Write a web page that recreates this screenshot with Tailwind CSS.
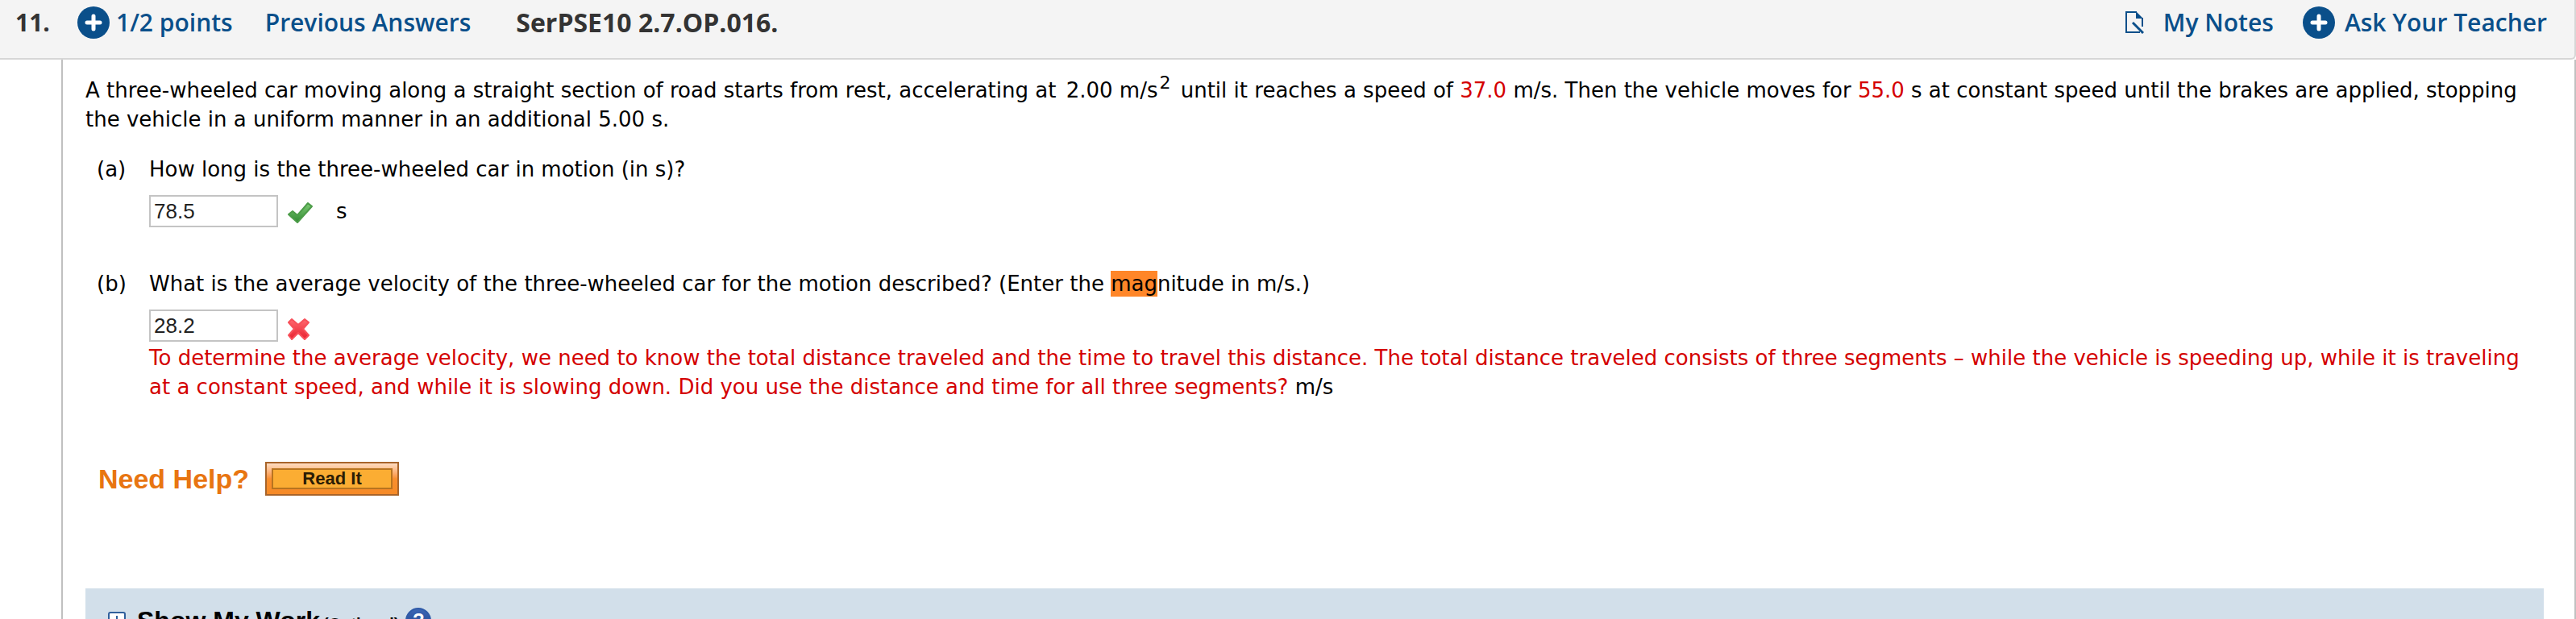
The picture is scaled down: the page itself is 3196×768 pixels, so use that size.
<!DOCTYPE html>
<html lang="en">
<head>
    <meta charset="UTF-8">
    <meta name="viewport" content="width=device-width, initial-scale=1.0">
    <title>SerPSE10 2.7.OP.016.</title>
    <script src="https://cdn.jsdelivr.net/npm/@tailwindcss/browser@4"></script>
</head>
<body class="h-screen flex flex-col overflow-hidden bg-white text-black text-[26px] leading-9 font-['Verdana','DejaVu_Sans',sans-serif]">

    <!-- Question header -->
    <header class="flex shrink-0 items-start justify-between h-[74px] pl-[19px] pr-[34px] pt-2 bg-[#f4f4f4] border-b-2 border-r-2 border-[#d6d6d6] rounded-br-md font-['Open_Sans',sans-serif] text-[30px] leading-10 font-semibold text-[#0a4f8a] whitespace-nowrap">
        <div class="flex items-center">
            <span class="w-[77px] text-[#333333] font-bold">11.</span>
            <a href="#" class="flex items-center gap-2">
                <svg class="size-10" viewBox="0 0 40 40"><circle cx="20" cy="20" r="20" fill="#0a4f8a"/><path d="M20 12v16M12 20h16" stroke="#fff" stroke-width="5" stroke-linecap="round"/></svg>
                1/2 points
            </a>
            <a href="#" class="ml-10">Previous Answers</a>
            <h1 class="ml-14 text-[#333333] text-[32px] font-bold">SerPSE10 2.7.OP.016.</h1>
        </div>
        <div class="flex items-center gap-9">
            <a href="#" class="flex items-center gap-6">
                <svg class="w-6 h-7" viewBox="0 0 24 28"><path d="M22 8v11M15 1H2v25h17" fill="none" stroke="#0a4f8a" stroke-width="2"/><path d="M14 0l9 9h-9z" fill="#0a4f8a"/><path d="M10 14l13 13" stroke="#0a4f8a" stroke-width="3"/></svg>
                My Notes
            </a>
            <a href="#" class="flex items-center gap-3">
                <svg class="size-10" viewBox="0 0 40 40"><circle cx="20" cy="20" r="20" fill="#0a4f8a"/><path d="M20 12v16M12 20h16" stroke="#fff" stroke-width="5" stroke-linecap="round"/></svg>
                Ask Your Teacher
            </a>
        </div>
    </header>

    <main class="grow ml-[76px] pl-7 pr-[38px] pt-5 border-l-2 border-r-2 border-[#c0c0c0]">
        <p>A three-wheeled car moving along a straight section of road starts from rest, accelerating at <span class="mx-1">2.00 m/s<sup class="ml-0.5 text-[22px]">2</sup></span> until it reaches a speed of <span class="text-[#d40000]">37.0</span> m/s. Then the vehicle moves for <span class="text-[#d40000]">55.0</span> s at constant speed until the brakes are applied, stopping the vehicle in a uniform manner in an additional 5.00 s.</p>

        <!-- Part (a) -->
        <section class="flex mt-[26px] pl-3.5">
            <span class="w-[65px] shrink-0">(a)</span>
            <div>
                <label for="part-a">How long is the three-wheeled car in motion (in s)?</label>
                <div class="flex items-center mt-3.5">
                    <input id="part-a" type="text" value="78.5" class="w-40 h-10 px-1 border-2 border-[#c4c4c4] text-[#222222] font-['Liberation_Sans',sans-serif]">
                    <svg class="w-8 h-7 ml-3 mt-1" viewBox="0 0 32 28">
                        <defs><linearGradient id="green" x2="0" y2="1"><stop stop-color="#7fcb74"/><stop offset="1" stop-color="#2f8a32"/></linearGradient></defs>
                        <path d="M1 16l5-4 6 5L25 2l5 4-18 20z" fill="url(#green)" stroke="#4c9c48" stroke-width="2" stroke-linejoin="round"/>
                    </svg>
                    <span class="ml-7">s</span>
                </div>
            </div>
        </section>

        <!-- Part (b) -->
        <section class="flex mt-13 pl-3.5">
            <span class="w-[65px] shrink-0">(b)</span>
            <div>
                <label for="part-b">What is the average velocity of the three-wheeled car for the motion described? (Enter the <mark class="py-px bg-[#ff8628] text-black">mag</mark>nitude in m/s.)</label>
                <div class="flex items-center mt-3.5">
                    <input id="part-b" type="text" value="28.2" class="w-40 h-10 px-1 border-2 border-[#c4c4c4] text-[#222222] font-['Liberation_Sans',sans-serif]">
                    <svg class="size-7 ml-3 mt-2" viewBox="0 0 28 28">
                        <defs><linearGradient id="red" x2="0" y2="1"><stop stop-color="#ff6a70"/><stop offset="1" stop-color="#e8202e"/></linearGradient></defs>
                        <path d="M5 2l8 7 8-7 5 4-7 8 7 8-5 5-8-8-8 8-4-5 7-8-7-8z" fill="url(#red)" stroke="#f8505a" stroke-width="2" stroke-linejoin="round"/>
                    </svg>
                </div>
                <p class="mt-0.5"><span class="text-[#d40000]">To determine the average velocity, we need to know the total distance traveled and the time to travel this distance. The total distance traveled consists of three segments – while the vehicle is speeding up, while it is traveling at a constant speed, and while it is slowing down. Did you use the distance and time for all three segments?</span> m/s</p>
            </div>
        </section>

        <!-- Help -->
        <div class="flex items-center gap-5 mt-[75px] pl-4 font-['Liberation_Sans',sans-serif] font-bold">
            <span class="text-[34px] text-[#e87511]">Need Help?</span>
            <button type="button" class="w-[166px] h-[42px] p-[6px] border-2 border-[#a8642a] bg-linear-to-b from-[#ffdcc0] via-[#f98f2e] to-[#f68a26]">
                <span class="flex items-center justify-center h-full border-2 border-[#b8741f] bg-[#fbad33] text-[22px] text-[#2a1c05]">Read It</span>
            </button>
        </div>

        <!-- Show my work -->
        <div class="flex items-center h-20 mt-[115px] pl-7 bg-[#d2dfea] font-['Liberation_Sans',sans-serif] font-bold">
            <button type="button" aria-label="Expand" class="mr-3.5">
                <svg class="size-[22px]" viewBox="0 0 22 22"><rect x="1" y="1" width="20" height="20" rx="2" fill="#fff" stroke="#2f5f9c" stroke-width="2"/><path d="M11 5v12M5 11h12" stroke="#2f5f9c" stroke-width="2"/></svg>
            </button>
            <h2 class="text-[32px]">Show My Work</h2>
            <span class="ml-1 mt-2 text-[20px]">(Optional)</span>
            <a href="#" class="flex items-center justify-center size-8 ml-2 rounded-full border-2 border-[#2f5aa8] bg-linear-to-b from-[#3d66b4] to-[#1d3f8c] text-2xl text-white">?</a>
        </div>
    </main>

</body>
</html>
